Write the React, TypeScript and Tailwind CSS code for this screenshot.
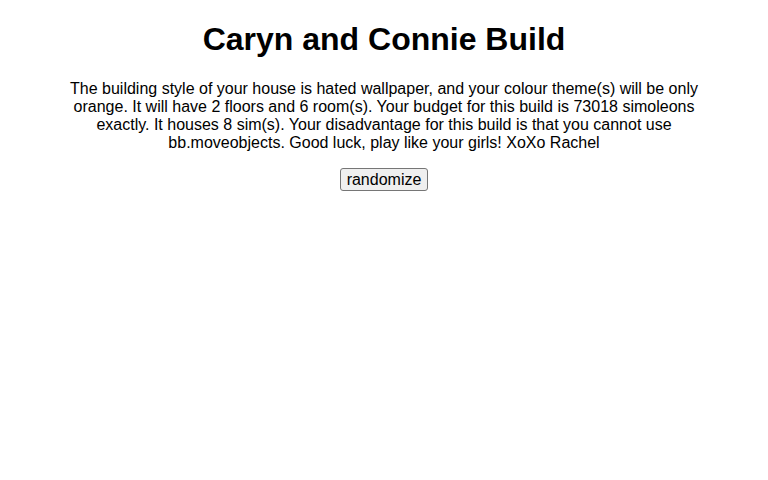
import React from "react";

const styles = ["hated wallpaper"];
const colours = ["only orange"];

export default function App() {
  const [build, setBuild] = React.useState({
    style: styles[0],
    colour: colours[0],
    floors: 2,
    rooms: 6,
    budget: 73018,
    sims: 8,
    disadvantage: "you cannot use bb.moveobjects",
  });

  function randomize() {
    setBuild((prev) => ({
      ...prev,
      floors: 1 + Math.floor(Math.random() * 3),
      rooms: 1 + Math.floor(Math.random() * 10),
      budget: 10000 + Math.floor(Math.random() * 90000),
      sims: 1 + Math.floor(Math.random() * 8),
    }));
  }

  return (
    <div className="min-h-screen bg-white px-2 text-center text-black font-['Liberation_Sans',Arial,sans-serif]">
      <h1 className="pt-[21px] text-[32px] font-bold leading-[37px]">
        Caryn and Connie Build
      </h1>
      <p className="mx-auto mt-[22px] max-w-[640px] text-base leading-[18px]">
        The building style of your house is {build.style}, and your colour
        theme(s) will be {build.colour}. It will have {build.floors} floors and{" "}
        {build.rooms} room(s). Your budget for this build is {build.budget}{" "}
        simoleons exactly. It houses {build.sims} sim(s). Your disadvantage for
        this build is that {build.disadvantage}. Good luck, play like your
        girls! XoXo Rachel
      </p>
      <button
        className="mt-[16px] rounded-[3px] border border-[#767676] bg-[#efefef] px-[6px] py-[1px] text-base leading-[19px] text-black hover:bg-[#e5e5e5]"
        onClick={randomize}
      >
        randomize
      </button>
    </div>
  );
}
